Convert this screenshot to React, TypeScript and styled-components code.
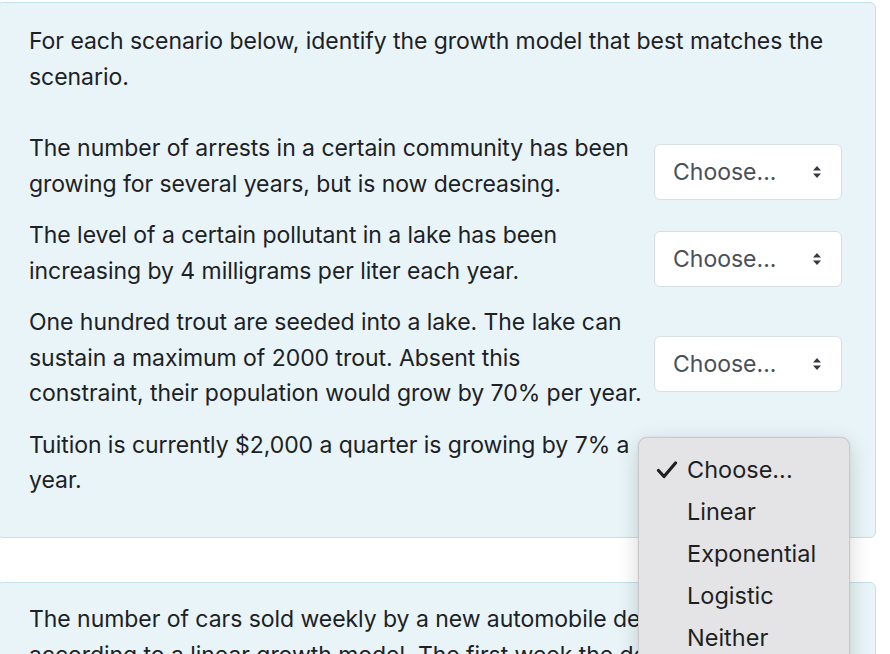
import React from "react";
import styled, { createGlobalStyle } from "styled-components";

const Global = createGlobalStyle`
  html, body { margin: 0; padding: 0; background: #ffffff; }
  body { font-family: Inter, "Noto Sans", "Liberation Sans", sans-serif; color: #1d2125; overflow: hidden; }
`;

const Page = styled.div`
  position: relative;
  width: 890px;
  height: 654px;
  overflow: hidden;
  padding-top: 2px;
  box-sizing: border-box;
`;

const Card = styled.div<{ $top?: number }>`
  margin-left: -3px;
  width: 879px;
  box-sizing: border-box;
  background: #e8f4f7;
  border: 1px solid #c2e3ea;
  border-radius: 6px;
  padding: ${(p) => p.$top ?? 20}px 33px 30px 31px;
  margin-bottom: 44px;
`;

const Para = styled.div<{ $lh?: number }>`
  font-size: 23px;
  line-height: ${(p) => p.$lh ?? 36}px;
  letter-spacing: -0.05px;
  white-space: nowrap;
`;

const Rows = styled.div`
  margin-top: 28px;
  display: flex;
  flex-direction: column;
`;

const Row = styled.div`
  display: grid;
  grid-template-columns: minmax(0, 1fr) 188px;
  column-gap: 14px;
  align-items: center;
  padding: 8px 0;
`;

const SelectCell = styled.div<{ $hidden?: boolean }>`
  padding-top: 11px;
  visibility: ${(p) => (p.$hidden ? "hidden" : "visible")};
`;

const SelectBox = styled.div`
  height: 56px;
  box-sizing: border-box;
  background: #ffffff;
  border: 1px solid #d7dde2;
  border-radius: 6px;
  display: flex;
  align-items: center;
  justify-content: space-between;
  padding: 0 19px 0 18px;
  font-size: 23px;
  color: #495057;
`;

const Arrows = styled.svg`
  width: 10px;
  height: 14px;
`;

const Dropdown = styled.div`
  position: absolute;
  left: 638px;
  top: 437px;
  width: 212px;
  height: 240px;
  box-sizing: border-box;
  background: #e4e4e6;
  border: 1px solid #c9cacd;
  border-radius: 9px;
  box-shadow: 0 6px 22px rgba(0, 0, 0, 0.16), 0 0 2px rgba(0, 0, 0, 0.1);
  padding-top: 10px;
`;

const Option = styled.div`
  display: flex;
  align-items: center;
  height: 42px;
  font-size: 23.5px;
  color: #1f1f21;
  padding-left: 48px;
  position: relative;
`;

const Check = styled.svg`
  position: absolute;
  left: 17px;
  top: 13px;
  width: 22px;
  height: 18px;
`;

const Select = () => (
  <SelectBox>
    <span>Choose...</span>
    <Arrows viewBox="0 0 10 14">
      <path d="M5 1 L9 5.5 H1 Z" fill="#343a40" />
      <path d="M5 13 L9 8.5 H1 Z" fill="#343a40" />
    </Arrows>
  </SelectBox>
);

const rows: React.ReactNode[] = [
  <>The number of arrests in a certain community has been<br />growing for several years, but is now decreasing.</>,
  <>The level of a certain pollutant in a lake has been<br />increasing by 4 milligrams per liter each year.</>,
  <>One hundred trout are seeded into a lake. The lake can<br />sustain a maximum of 2000 trout. Absent this<br />constraint, their population would grow by 70% per year.</>,
  <>Tuition is currently $2,000 a quarter is growing by 7% a<br />year.</>,
];

const options = ["Choose...", "Linear", "Exponential", "Logistic", "Neither"];

export default function App() {
  return (
    <Page>
      <Global />
      <Card>
        <Para>
          For each scenario below, identify the growth model that best matches the<br />
          scenario.
        </Para>
        <Rows>
          {rows.map((r, i) => (
            <Row key={i}>
              <Para $lh={35.5}>{r}</Para>
              <SelectCell $hidden={i === 3}>
                <Select />
              </SelectCell>
            </Row>
          ))}
        </Rows>
      </Card>
      <Card $top={18}>
        <Para>
          The number of cars sold weekly by a new automobile dealership grows<br />
          according to a linear growth model. The first week the dealership<br />
          sold 7 cars.
        </Para>
      </Card>
      <Dropdown>
        {options.map((o, i) => (
          <Option key={o}>
            {i === 0 && (
              <Check viewBox="0 0 22 18">
                <path d="M2.5 9.5 L8 15.5 L19.5 2" fill="none" stroke="#1f1f21" strokeWidth="3.2" strokeLinecap="round" strokeLinejoin="round" />
              </Check>
            )}
            {o}
          </Option>
        ))}
      </Dropdown>
    </Page>
  );
}
